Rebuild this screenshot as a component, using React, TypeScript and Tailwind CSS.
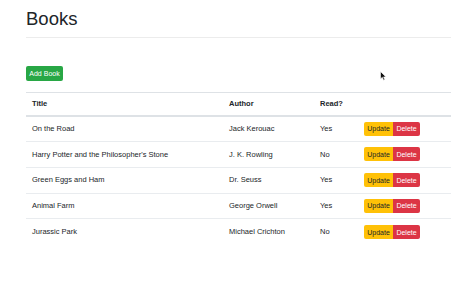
const books = [
  { title: "On the Road", author: "Jack Kerouac", read: "Yes" },
  { title: "Harry Potter and the Philosopher's Stone", author: "J. K. Rowling", read: "No" },
  { title: "Green Eggs and Ham", author: "Dr. Seuss", read: "Yes" },
  { title: "Animal Farm", author: "George Orwell", read: "Yes" },
  { title: "Jurassic Park", author: "Michael Crichton", read: "No" },
];

export default function App() {
  return (
    <div className="relative w-[474px] h-[287px] bg-white text-[#212529] font-['Liberation_Sans',Arial,sans-serif]">
      <div className="ml-[26px] w-[425px] pt-[8px]">
        <h1 className="text-[18.5px] leading-[1.2] font-normal">Books</h1>
        <hr className="mt-[7px] border-t border-[#ececec]" />
        <div className="flex pt-[28px]">
          <button className="h-[15px] w-[37px] rounded-[2px] bg-[#28a745] text-white text-[7px] leading-none">
            Add Book
          </button>
        </div>
        <table className="mt-[11px] w-full border-collapse text-[7.5px] leading-none">
          <thead>
            <tr className="h-[23px] border-t border-b-2 border-[#dee2e6]">
              <th className="w-[197px] pl-[6px] text-left font-bold">Title</th>
              <th className="w-[91px] pl-[6px] text-left font-bold">Author</th>
              <th className="w-[44px] pl-[6px] text-left font-bold">Read?</th>
              <th className="pl-[6px]"></th>
            </tr>
          </thead>
          <tbody>
            {books.map((b, i) => (
              <tr key={b.title} className={`h-[25.8px] ${i < books.length - 1 ? "border-b" : ""} border-[#e9ecef]`}>
                <td className="pl-[6px]">{b.title}</td>
                <td className="pl-[6px]">{b.author}</td>
                <td className="pl-[6px]">{b.read}</td>
                <td className="pl-[6px]">
                  <div className="flex">
                    <button className="h-[14px] w-[29px] rounded-l-[2px] bg-[#ffc107] text-[#212529] text-[7px] leading-none">
                      Update
                    </button>
                    <button className="h-[14px] w-[27px] rounded-r-[2px] bg-[#dc3545] text-white text-[7px] leading-none">
                      Delete
                    </button>
                  </div>
                </td>
              </tr>
            ))}
          </tbody>
        </table>
      </div>
      <svg className="absolute left-[380px] top-[71px]" width="7" height="10" viewBox="0 0 7 10">
        <path d="M0.5 0.5 L0.5 8 L2.3 6.3 L3.6 9.3 L4.8 8.8 L3.6 5.9 L6 5.9 Z" fill="#111" stroke="#fff" strokeWidth="0.6" />
      </svg>
    </div>
  );
}
